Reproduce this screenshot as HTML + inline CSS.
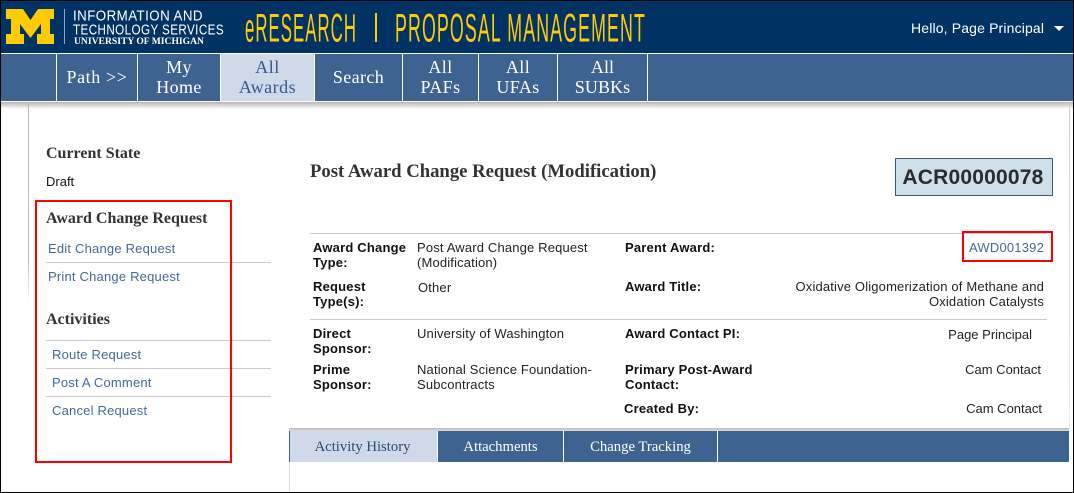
<!DOCTYPE html>
<html><head><meta charset="utf-8"><style>
html,body{margin:0;padding:0;background:#fff}
#p{position:relative;width:1074px;height:493px;overflow:hidden;background:#fff;font-family:"Liberation Sans",Arial,sans-serif;font-size:13px;color:#222}
#p div,#p svg{position:absolute}
.t{white-space:nowrap;line-height:15px;letter-spacing:.16px}
.b{font-weight:bold;color:#111;letter-spacing:.2px}
.l{color:#436a9c;letter-spacing:.2px}
.z{letter-spacing:0}
.h{font-family:"Liberation Serif",serif;font-weight:bold;font-size:16px;line-height:18px;color:#333;white-space:nowrap}
.n{font-family:"Liberation Serif",serif;font-size:18px;line-height:20px;letter-spacing:.4px;color:#fff;text-align:center;white-space:nowrap}
.s{background:#fff;width:1px;top:54px;height:47px}
.r{background:#ccc;height:1px}
.tb{font-family:"Liberation Serif",serif;font-size:14.700px;line-height:16px;color:#fff;text-align:center;white-space:nowrap;top:439px}
</style></head><body><div id="p">
<div style="left:0;top:0;width:1074px;height:53px;background:#003264"></div>
<div style="left:0;top:53px;width:1074px;height:1px;background:#fff"></div>
<div style="left:0;top:54px;width:1074px;height:47px;background:#3f6390"></div>
<div style="left:0;top:101px;width:1074px;height:1px;background:#fff"></div>
<div style="left:0;top:102px;width:1074px;height:7px;background:linear-gradient(#b4b4b4,#fff)"></div>
<svg style="left:0;top:0" width="1074" height="53">
<polygon fill="#ffcb05" points="6,9 23,9 30.500,20 38,9 54,9 54,19 50,19 50,34 54,34 54,44 37,44 37,34 41,34 41,24 30.500,38 20,24 20,34 24,34 24,44 6,44 6,34 11,34 11,19 6,19"/>
<rect x="64" y="9" width="1" height="35" fill="#8ea4bf"/>
<g fill="#fff" font-family="Liberation Sans,Arial,sans-serif">
<text x="73" y="20.500" font-size="15" textLength="130" lengthAdjust="spacingAndGlyphs" letter-spacing=".5">INFORMATION AND</text>
<text x="73" y="34.500" font-size="14.500" textLength="151" lengthAdjust="spacingAndGlyphs" letter-spacing=".5">TECHNOLOGY SERVICES</text>
</g>
<text x="74" y="44" fill="#fff" font-family="Liberation Serif,serif" font-size="9.500" font-weight="bold" textLength="130" lengthAdjust="spacingAndGlyphs">UNIVERSITY OF MICHIGAN</text>
<g fill="#ffcb05" font-family="Liberation Sans,Arial,sans-serif" font-size="40">
<text x="245" y="41.500" textLength="112" lengthAdjust="spacingAndGlyphs" letter-spacing="2.500">eRESEARCH</text>
<text x="395" y="41.500" textLength="251" lengthAdjust="spacingAndGlyphs" letter-spacing="2.500">PROPOSAL MANAGEMENT</text>
</g>
<rect x="375" y="13" width="2" height="29" fill="#ffcb05"/>
<polygon fill="#fff" points="1054,26 1064,26 1059,31"/>
</svg>
<div class="t" style="left:911px;top:21px;color:#fff;font-size:14px;line-height:15px;letter-spacing:.15px">Hello, Page Principal</div>

<div style="left:221px;top:54px;width:93px;height:47px;background:#d0d9e9"></div>
<div class="s" style="left:56px"></div><div class="s" style="left:137px"></div><div class="s" style="left:220px"></div><div class="s" style="left:314px"></div><div class="s" style="left:402px"></div><div class="s" style="left:478px"></div><div class="s" style="left:557px"></div><div class="s" style="left:647px"></div>
<div class="n" style="left:57px;width:80px;top:67px;letter-spacing:.6px">Path &gt;&gt;</div>
<div class="n" style="left:138px;width:82px;top:57px;">My<br>Home</div>
<div class="n" style="left:221px;width:93px;top:57px;color:#2f5a8c;letter-spacing:.5px">All<br>Awards</div>
<div class="n" style="left:315px;width:87px;top:67px">Search</div>
<div class="n" style="left:403px;width:75px;top:57px">All<br>PAFs</div>
<div class="n" style="left:479px;width:78px;top:57px">All<br>UFAs</div>
<div class="n" style="left:558px;width:89px;top:57px;letter-spacing:.1px">All<br>SUBKs</div>

<div style="left:28px;top:102px;width:1px;height:200px;background:linear-gradient(#bbb 80%,#fff)"></div>
<div style="left:1069px;top:102px;width:1px;height:330px;background:linear-gradient(#ccc,#eee)"></div>

<div class="h" style="left:46px;top:145px">Current State</div>
<div class="t z" style="left:46px;top:174px;color:#111">Draft</div>
<div class="h" style="left:46px;top:210px">Award Change Request</div>
<div class="t l" style="left:48px;top:241px">Edit Change Request</div>
<div class="r" style="left:46px;top:262px;width:225px"></div>
<div class="t l" style="left:48px;top:269px">Print Change Request</div>
<div class="h" style="left:46px;top:311px">Activities</div>
<div class="r" style="left:46px;top:340px;width:225px"></div>
<div class="t l" style="left:52px;top:347px">Route Request</div>
<div class="r" style="left:46px;top:368px;width:225px"></div>
<div class="t l" style="left:52px;top:375px">Post A Comment</div>
<div class="r" style="left:46px;top:396px;width:225px"></div>
<div class="t l" style="left:52px;top:403px">Cancel Request</div>
<div style="left:35px;top:200px;width:193px;height:259px;border:2px solid #f00"></div>

<div style="left:310px;top:162px;font-family:'Liberation Serif',serif;font-weight:bold;font-size:18.700px;line-height:20px;color:#333;white-space:nowrap">Post Award Change Request (Modification)</div>
<div style="left:895px;top:158px;width:156px;height:36px;background:#cfdfe9;border:1px solid #3f5a70;font-weight:bold;font-size:21px;line-height:37px;color:#2b2b2b;text-align:center;letter-spacing:.2px;text-indent:-2px">ACR00000078</div>

<div class="r" style="left:310px;top:233px;width:737px"></div>
<div class="r" style="left:310px;top:319px;width:737px"></div>

<div class="t b" style="left:313px;top:240px">Award Change<br>Type:</div>
<div class="t" style="left:417px;top:240px">Post Award Change Request<br>(Modification)</div>
<div class="t b" style="left:625px;top:240px">Parent Award:</div>
<div class="t l" style="left:969px;top:240px">AWD001392</div>
<div style="left:962px;top:231px;width:87px;height:27px;border:2px solid #f00"></div>

<div class="t b" style="left:313px;top:279px">Request<br>Type(s):</div>
<div class="t" style="left:418px;top:280px">Other</div>
<div class="t b" style="left:625px;top:279px">Award Title:</div>
<div class="t" style="right:30px;top:279px;text-align:right">Oxidative Oligomerization of Methane and<br>Oxidation Catalysts</div>

<div class="t b" style="left:313px;top:326px">Direct<br>Sponsor:</div>
<div class="t" style="left:417px;top:326px">University of Washington</div>
<div class="t b" style="left:625px;top:326px">Award Contact PI:</div>
<div class="t z" style="right:42px;top:327px">Page Principal</div>

<div class="t b" style="left:313px;top:362px">Prime<br>Sponsor:</div>
<div class="t" style="left:417px;top:362px">National Science Foundation-<br>Subcontracts</div>
<div class="t b" style="left:625px;top:362px">Primary Post-Award<br>Contact:</div>
<div class="t z" style="right:33px;top:362px">Cam Contact</div>

<div class="t b" style="left:624px;top:401px;font-weight:bold">Created By:</div>
<div class="t z" style="right:32px;top:401px">Cam Contact</div>

<div style="left:289px;top:428px;width:780px;height:3px;background:linear-gradient(#bbb,#ddd)"></div>
<div style="left:289px;top:431px;width:780px;height:31px;background:#3f6390"></div>
<div style="left:290px;top:431px;width:147px;height:31px;background:#d0d9e9"></div>
<div class="s" style="left:437px;top:431px;height:31px"></div>
<div class="s" style="left:563px;top:431px;height:31px"></div>
<div class="s" style="left:717px;top:431px;height:31px"></div>
<div class="tb" style="left:289px;width:147px;color:#2f4a70">Activity History</div>
<div class="tb" style="left:438px;width:125px">Attachments</div>
<div class="tb" style="left:564px;width:153px">Change Tracking</div>
<div style="left:289px;top:462px;width:1px;height:31px;background:#ddd"></div>

<div style="left:0;top:0;width:1072px;height:491px;border:1px solid #000"></div>
</div></body></html>
